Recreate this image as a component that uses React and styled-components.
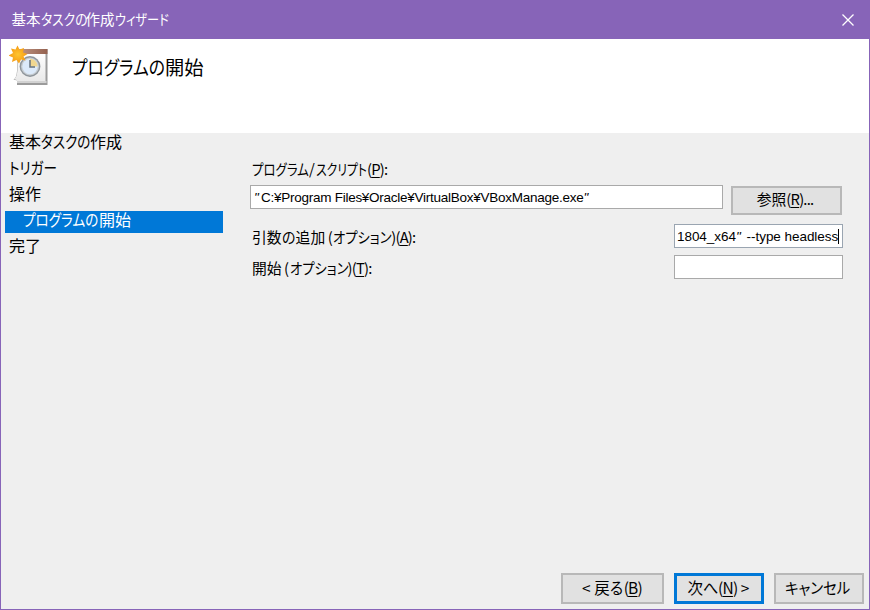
import React from 'react';
import styled, { createGlobalStyle } from 'styled-components';

const palette = {
  purple: '#8764b8',
  face: '#efefef',
  white: '#ffffff',
  blue: '#0078d7',
  button: '#e1e1e1',
  border: '#b8b8b8',
};

// kana are set narrower than kanji, w is the width they take up in px
const Kana = ({ w, s = 0.85, children }) => (
  <KanaText $w={w} $s={s}>
    {children}
  </KanaText>
);

const App = () => {
  return (
    <>
      <GlobalStyle />
      <Window>
        <TitleBar>
          <Title>
            基本<Kana w={45} s={0.88}>タスクの</Kana>作成<Kana w={52} s={0.84}>ウィザード</Kana>
          </Title>
          <CloseButton aria-label="閉じる">
            <CloseIcon />
          </CloseButton>
        </TitleBar>
        <Header>
          <TaskIcon />
          <Heading>
            <Kana w={93} s={0.87}>プログラムの</Kana>開始
          </Heading>
        </Header>
        <Body>
          <Steps>
            <Step>
              基本<Kana w={49}>タスクの</Kana>作成
            </Step>
            <Step>
              <Kana w={48}>トリガー</Kana>
            </Step>
            <Step>操作</Step>
            <Step $active>
              <Kana w={76}>プログラムの</Kana>開始
            </Step>
            <Step>完了</Step>
          </Steps>
          <Form>
            <Label>
              <Kana w={57} s={0.84}>プログラム</Kana>
              <Latin $w={7}>/</Latin>
              <Kana w={51} s={0.8}>スクリプト</Kana>
              <Latin $w={21}>
                (<u>P</u>):
              </Latin>
            </Label>
            <ProgramRow>
              <Field $width={473} $tracking={-0.26}>
                <Quote>"</Quote>C:¥Program Files¥Oracle¥VirtualBox¥VBoxManage.exe<Quote>"</Quote>
              </Field>
              <BrowseButton>
                参照
                <Latin>
                  (<u>R</u>)...
                </Latin>
              </BrowseButton>
            </ProgramRow>
            <OptionRow>
              <Label>
                引数<Kana w={14} s={0.94}>の</Kana>追加
                <Latin $w={8}>&nbsp;(</Latin>
                <Kana w={58} s={0.9}>オプション</Kana>
                <Latin>
                  )(<u>A</u>):
                </Latin>
              </Label>
              <Field $width={169} $focused $tracking={-0.05}>
                1804_x64<Quote>"</Quote> --type headless
                <Caret />
              </Field>
            </OptionRow>
            <OptionRow>
              <Label>
                開始
                <Latin $w={8}>&nbsp;(</Latin>
                <Kana w={58} s={0.9}>オプション</Kana>
                <Latin>
                  )(<u>T</u>):
                </Latin>
              </Label>
              <Field $width={169} />
            </OptionRow>
          </Form>
        </Body>
        <Footer>
          <Button $width={103}>
            &lt; 戻<Kana w={14} s={0.95}>る</Kana>
            <Latin>
              (<u>B</u>)
            </Latin>
          </Button>
          <Button $width={90} $primary>
            次<Kana w={15} s={0.98}>へ</Kana>
            <Latin>
              (<u>N</u>)
            </Latin>
            {' >'}
          </Button>
          <Button $width={90}>
            <Kana w={67} s={0.93}>キャンセル</Kana>
          </Button>
        </Footer>
      </Window>
    </>
  );
};

export default App;

const CloseIcon = () => (
  <svg width="12" height="12" viewBox="0 0 12 12">
    <path d="M0.5 0.5L11.5 11.5M11.5 0.5L0.5 11.5" stroke="#fff" strokeWidth="1.3" />
  </svg>
);

const TaskIcon = () => (
  <svg width="42" height="42" viewBox="0 0 42 42">
    <defs>
      <linearGradient id="paper" x1="0" y1="0" x2="0" y2="1">
        <stop offset="0" stopColor="#fff" />
        <stop offset="1" stopColor="#e9e9e9" />
      </linearGradient>
      <linearGradient id="binding" x1="0" y1="0" x2="1" y2="0">
        <stop offset="0" stopColor="#c39a86" />
        <stop offset="1" stopColor="#94614f" />
      </linearGradient>
      <radialGradient id="sun">
        <stop offset="0" stopColor="#ffc52e" />
        <stop offset="1" stopColor="#f59a14" />
      </radialGradient>
    </defs>
    <path d="M8 4H38.500V40H8V35.500L4.500 34.500Q7.500 33 8 26Z" fill="#9b9b9b" />
    <path d="M8.500 8H36.500V36H7.500V35L5 34Q8 32.500 8.500 25Z" fill="url(#paper)" />
    <path d="M8 36H37.500V38H8Z" fill="#d2d2d2" />
    <path d="M8 4H38.500V9H8Z" fill="url(#binding)" />
    <circle cx="21" cy="21.500" r="10.400" fill="#8e959b" />
    <circle cx="21" cy="21.500" r="9" fill="#c6ccd1" />
    <circle cx="21" cy="21.500" r="7.700" fill="#dceafa" />
    <path d="M21 21.500V13.800A7.700 7.700 0 0 1 28.700 21.500Z" fill="#f0d790" />
    <path d="M21 15V22H26" fill="none" stroke="#66717c" strokeWidth="1.500" />
    <path
      d="M8.500 0.500L10.500 4.500L15 3L14 7.500L18.500 9L14.500 11.500L16.500 15.500L12 14.500L10 18.500L7.500 15L3 17L4 12.500L-0.500 10.500L4 8L2 3.500L6.500 4.500Z"
      fill="url(#sun)"
    />
  </svg>
);

const GlobalStyle = createGlobalStyle`
  body {
    margin: 0;
  }

  * {
    box-sizing: border-box;
  }
`;

const Window = styled.div`
  width: 870px;
  height: 610px;
  display: flex;
  flex-direction: column;
  border: 1px solid ${palette.purple};
  background-color: ${palette.face};
  color: #000;
  font-family: 'Noto Sans CJK JP', sans-serif;
  font-size: 16px;
  white-space: nowrap;
`;

const KanaText = styled.span`
  display: inline-block;
  width: ${(props) => props.$w}px;
  transform: scaleX(${(props) => props.$s});
  transform-origin: left;
  text-align: left;
  font-feature-settings: 'palt';
`;

const Latin = styled.span`
  display: inline-block;
  width: ${(props) => (props.$w ? `${props.$w}px` : 'auto')};
  letter-spacing: -0.8px;

  u {
    text-underline-offset: 2px;
  }
`;

const TitleBar = styled.div`
  height: 38px;
  flex: none;
  display: flex;
  align-items: center;
  justify-content: space-between;
  padding-left: 10.5px;
  background-color: ${palette.purple};
`;

const Title = styled.div`
  margin-bottom: 2px;
  color: ${palette.white};
  font-size: 14.5px;
  font-weight: 400;
  line-height: 20px;
`;

const CloseButton = styled.button`
  width: 42px;
  height: 38px;
  display: flex;
  align-items: center;
  justify-content: center;
  padding: 0;
  border: none;
  background: none;
`;

const Header = styled.div`
  height: 94px;
  flex: none;
  display: flex;
  align-items: flex-start;
  gap: 21px;
  padding: 6px 0 0 8px;
  background-color: ${palette.white};
`;

const Heading = styled.div`
  margin-top: 8px;
  font-size: 19.3px;
  line-height: 29px;
`;

const Body = styled.div`
  flex: 1;
  display: flex;
`;

const Steps = styled.div`
  width: 218px;
  margin-left: 4px;
  margin-right: 27px;
  display: flex;
  flex-direction: column;
  gap: 4px;
`;

const Step = styled.div`
  height: 22px;
  padding-left: ${(props) => (props.$active ? 18 : 4)}px;
  background-color: ${(props) => (props.$active ? palette.blue : 'transparent')};
  color: ${(props) => (props.$active ? palette.white : 'inherit')};
  font-size: 16px;
  line-height: 17px;
`;

const Form = styled.div`
  flex: 1;
  padding-top: 25px;
`;

const Label = styled.div`
  padding-left: 2px;
  font-size: 14.8px;
  line-height: 22px;
`;

const Field = styled.div`
  width: ${(props) => props.$width}px;
  height: 24px;
  display: flex;
  align-items: center;
  padding-left: ${(props) => (props.$focused ? 2 : 3)}px;
  border: 1px solid ${(props) => (props.$focused ? '#9aa5b1' : '#a9a9a9')};
  background-color: ${palette.white};
  font-family: 'Liberation Sans', sans-serif;
  font-size: 13.5px;
  letter-spacing: ${(props) => props.$tracking || 0}px;
  white-space: pre;
`;

const Quote = styled.span`
  width: 7px;
  font-style: italic;
`;

const Caret = styled.span`
  width: 1px;
  height: 15px;
  background-color: #000;
`;

const ProgramRow = styled.div`
  display: flex;
  gap: 8px;
  margin: 5px 0 9px;
`;

const OptionRow = styled.div`
  display: flex;
  justify-content: space-between;
  align-items: flex-start;
  height: 25px;
  margin-right: 26px;
  margin-bottom: 6px;

  ${Label} {
    line-height: 26px;
  }
`;

const Button = styled.button`
  width: ${(props) => props.$width}px;
  height: 31px;
  display: flex;
  align-items: center;
  justify-content: center;
  padding: 0 1px 3px 0;
  border: ${(props) => (props.$primary ? `3px solid ${palette.blue}` : `2px solid ${palette.border}`)};
  background-color: ${palette.button};
  color: #000;
  font-family: inherit;
  font-size: 15.5px;
  white-space: pre;
`;

const BrowseButton = styled(Button)`
  width: 111px;
  height: 29px;
  margin-top: 1px;
  padding: 0 3px 4px 0;
  font-size: 14.8px;
`;

const Footer = styled.div`
  display: flex;
  justify-content: flex-end;
  gap: 10px;
  padding: 0 5px 5px 0;
`;
